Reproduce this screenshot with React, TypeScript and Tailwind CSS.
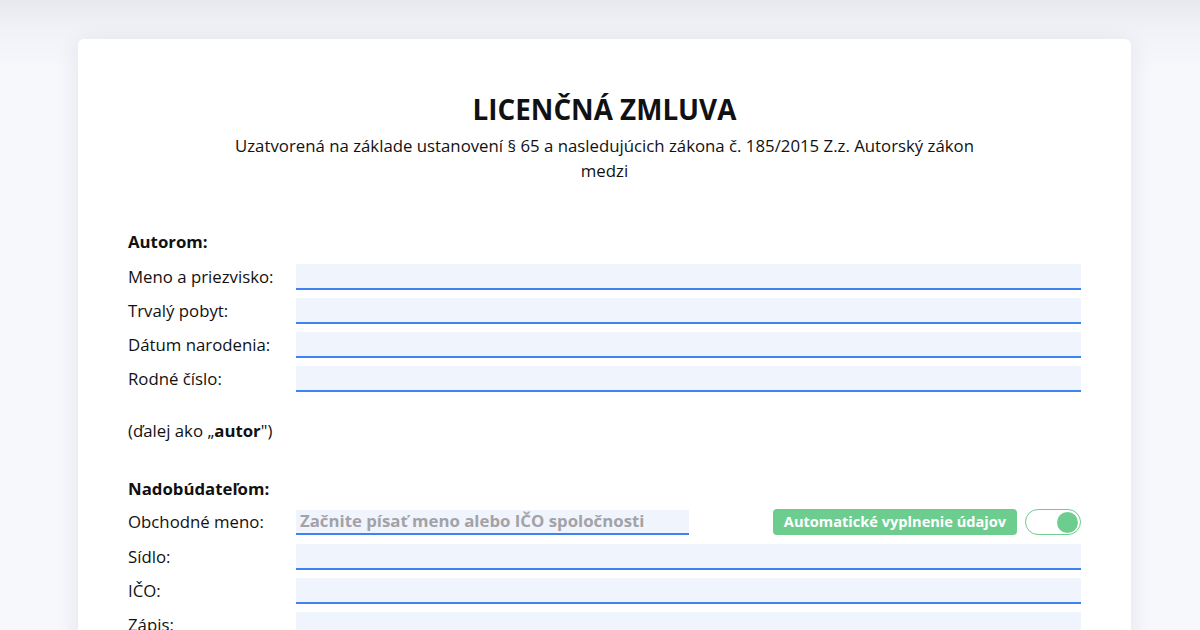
import React from "react";

const Field = ({ label }: { label: string }) => (
  <div className="flex items-center h-[26px]">
    <div className="w-[168px] shrink-0 text-[16.8px] text-[#111]">{label}</div>
    <div className="flex-1 h-[26px] bg-[#f0f4fd] border-b-2 border-[#3f83f0]" />
  </div>
);

export default function App() {
  return (
    <div
      className="w-[1200px] h-[630px] overflow-hidden bg-[linear-gradient(to_bottom,#e8e9ee_0px,#f1f2f7_30px,#f7f8fc_70px,#f7f8fc_100%)] pt-[39px] pl-[78px]"
      style={{ fontFamily: '"Open Sans", "Noto Sans", sans-serif' }}
    >
      <div className="w-[1053px] h-[640px] bg-white rounded-[6px] shadow-[0_4px_24px_rgba(30,35,90,0.09)] px-[50px] pt-[52px] text-[#111]">
        <h1 className="text-center text-[27.8px] font-bold leading-[36px]">LICENČNÁ ZMLUVA</h1>
        <p className="text-center text-[16.8px] leading-[25px] mt-[6px]">
          Uzatvorená na základe ustanovení § 65 a nasledujúcich zákona č. 185/2015 Z.z. Autorský zákon
          <br />
          medzi
        </p>

        <div className="mt-[47px] text-[16.8px] font-bold leading-[24px]">Autorom:</div>
        <div className="mt-[10px] flex flex-col gap-[8px]">
          <Field label="Meno a priezvisko:" />
          <Field label="Trvalý pobyt:" />
          <Field label="Dátum narodenia:" />
          <Field label="Rodné číslo:" />
        </div>

        <div className="mt-[27px] text-[16.8px] leading-[24px]">
          (ďalej ako „<span className="font-bold">autor</span>")
        </div>

        <div className="mt-[34px] text-[16.8px] font-bold leading-[24px]">Nadobúdateľom:</div>
        <div className="mt-[8px] flex flex-col gap-[9px]">
          <div className="flex items-center h-[26px]">
            <div className="w-[168px] shrink-0 text-[16.8px]">Obchodné meno:</div>
            <div className="w-[393px] h-[25px] bg-[#f0f4fd] border-b-2 border-[#3f83f0] flex items-center pl-[4px] text-[16.8px] font-bold text-[#a2a2a7] leading-none">
              Začnite písať meno alebo IČO spoločnosti
            </div>
            <div className="flex-1" />
            <div className="h-[26px] w-[244px] rounded-[4px] bg-[#6dcd8f] text-white text-[14.6px] font-bold flex items-center justify-center">
              Automatické vyplnenie údajov
            </div>
            <div className="ml-[8px] w-[56px] h-[26px] rounded-full border border-[#6dcd8f] bg-white flex items-center justify-end pr-[2px]">
              <div className="w-[21px] h-[21px] rounded-full bg-[#6dcd8f]" />
            </div>
          </div>
          <div className="flex flex-col gap-[8px]">
            <Field label="Sídlo:" />
            <Field label="IČO:" />
            <Field label="Zápis:" />
          </div>
        </div>
      </div>
    </div>
  );
}
